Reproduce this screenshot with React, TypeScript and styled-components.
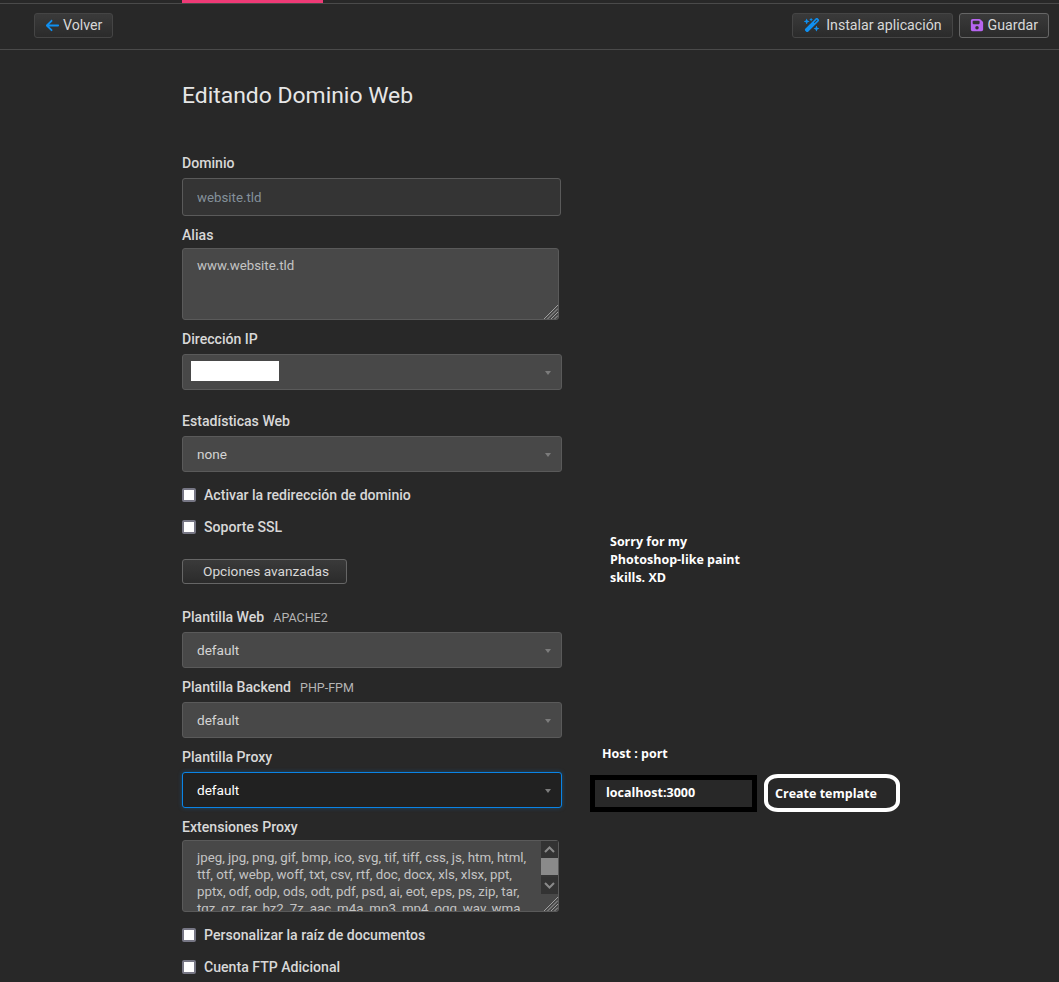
import React from "react";
import styled, { createGlobalStyle } from "styled-components";
import { FaArrowLeft, FaFloppyDisk, FaWandMagicSparkles } from "react-icons/fa6";

const Global = createGlobalStyle`
  html, body { margin: 0; padding: 0; background: #282828; height: 982px; overflow: hidden; }
  body { font-family: Roboto, "Noto Sans", sans-serif; font-size: 14px; color: #ddd; }
  * { box-sizing: border-box; }
`;

const ProgressTrack = styled.div`
  height: 4px;
  border-bottom: 1px solid #4a4a4a;
  padding-left: 182px;
`;
const ProgressBar = styled.div`
  width: 141px;
  height: 3px;
  background: #ee3a76;
`;
const Toolbar = styled.header`
  height: 46px;
  border-bottom: 1px solid #4a4a4a;
  padding: 9px 10px 0 34px;
  display: flex;
  justify-content: space-between;
  align-items: flex-start;
`;
const ToolGroup = styled.div`
  display: flex;
  gap: 6px;
`;
const ToolButton = styled.button<{ $strong?: boolean; $gap: number; $left?: number }>`
  height: 25px;
  display: inline-flex;
  align-items: center;
  gap: ${(p) => p.$gap}px;
  padding: 0 10px 1px ${(p) => p.$left ?? 10}px;
  border: 1px solid ${(p) => (p.$strong ? "#666" : "#454545")};
  border-radius: 3px;
  background: linear-gradient(#3a3a3a, #2b2b2b);
  color: #d8d8d8;
  font: 400 14.2px Roboto, sans-serif;
  svg { flex: none; }
`;
const Page = styled.main`
  display: flex;
  padding-left: 182px;
`;
const Form = styled.form`
  width: 380px;
  padding-top: 31px;
  flex: none;
`;
const Title = styled.h1`
  margin: 0 0 42px;
  font: 400 22.9px/30px Roboto, sans-serif;
  color: #e6e6e6;
`;
const Label = styled.label<{ $top: number; $gap: number }>`
  display: flex;
  align-items: baseline;
  gap: 9px;
  height: 20px;
  margin: ${(p) => p.$top}px 0 ${(p) => p.$gap}px;
  font-weight: 500;
  font-size: 14.1px;
  line-height: 20px;
  color: #d8d8d8;
`;
const Hint = styled.span`
  font-weight: 400;
  font-size: 12.5px;
  color: #b5b5b5;
`;
const TextInput = styled.input`
  display: block;
  width: 379px;
  height: 38px;
  padding: 0 14px;
  border: 1px solid #5a5a5a;
  border-radius: 3px;
  background: #343434;
  color: #84919b;
  font: 400 13.3px Roboto, sans-serif;
  outline: none;
`;
const AreaWrap = styled.div`
  position: relative;
  width: 377px;
`;
const TextArea = styled.textarea`
  display: block;
  width: 377px;
  height: 72px;
  padding: 8px 14px;
  border: 1px solid #5a5a5a;
  border-radius: 3px;
  background: #484848;
  color: #c4c4c4;
  font: 400 13.3px/17px Roboto, sans-serif;
  outline: none;
  resize: vertical;
  overflow: hidden;
  &::-webkit-resizer {
    background: url("data:image/svg+xml,%3Csvg xmlns='http://www.w3.org/2000/svg' width='15' height='15'%3E%3Cpath d='M15 1L1 15M15 4.5L4.5 15M15 8L8 15M15 11.5L11.5 15' stroke='%23a0a0a0' stroke-width='1' fill='none'/%3E%3C/svg%3E") no-repeat;
  }
`;
const ScrollBar = styled.div`
  position: absolute;
  top: 1px;
  right: 1px;
  width: 17px;
  height: 53px;
  display: flex;
  flex-direction: column;
  background: #363636;
`;
const ScrollStep = styled.div`
  height: 17px;
  flex: none;
  display: flex;
  align-items: center;
  justify-content: center;
  background: #333;
`;
const ScrollThumb = styled.div`
  height: 17px;
  margin-bottom: 2px;
  flex: none;
  background: #8a8a8a;
`;
const SelectWrap = styled.div`
  position: relative;
  width: 380px;
  &::after {
    content: "";
    position: absolute;
    right: 11px;
    top: 50%;
    margin-top: -1px;
    border: 3.5px solid transparent;
    border-top: 4px solid #7c7c7c;
    border-bottom: 0;
  }
`;
const Select = styled.select<{ $focus?: boolean }>`
  display: block;
  width: 100%;
  height: 36px;
  padding: 0 14px;
  appearance: none;
  border: 1px solid ${(p) => (p.$focus ? "#0a84e6" : "#5a5a5a")};
  border-radius: 3px;
  background: ${(p) => (p.$focus ? "#212121" : "#484848")};
  color: ${(p) => (p.$focus ? "#fff" : "#d4d4d4")};
  font: 400 13.6px Roboto, sans-serif;
  outline: none;
  box-shadow: ${(p) => (p.$focus ? "0 0 4px rgba(10,132,230,.35)" : "none")};
`;
const Redaction = styled.div`
  position: absolute;
  left: 9px;
  top: 7px;
  width: 88px;
  height: 20px;
  background: #fff;
`;
const CheckRow = styled.label<{ $top: number }>`
  display: flex;
  align-items: center;
  gap: 8px;
  height: 20px;
  margin-top: ${(p) => p.$top}px;
  font-weight: 500;
  font-size: 14.1px;
  color: #d8d8d8;
`;
const Check = styled.input`
  appearance: none;
  flex: none;
  margin: 0;
  width: 14px;
  height: 14px;
  border: 2px solid #777785;
  border-radius: 2px;
  background: #fff;
`;
const PlainButton = styled.button`
  display: block;
  width: 165px;
  height: 25px;
  margin-top: 22px;
  padding: 0 0 2px 3px;
  border: 1px solid #666;
  border-radius: 3px;
  background: linear-gradient(#3a3a3a, #2b2b2b);
  color: #d8d8d8;
  font: 400 13.7px Roboto, sans-serif;
`;
const Aside = styled.aside`
  margin-left: 28px;
  padding-top: 483px;
  font-family: "Open Sans", "Noto Sans", sans-serif;
  font-weight: 700;
  font-size: 12.5px;
  color: #fff;
`;
const Note = styled.p`
  margin: 0 0 157px 20px;
  width: 150px;
  line-height: 18px;
`;
const HostLabel = styled.div`
  margin: 0 0 11px 12px;
  line-height: 20px;
`;
const HostRow = styled.div`
  display: flex;
  align-items: flex-start;
  gap: 7px;
`;
const HostBox = styled.div`
  width: 167px;
  height: 37px;
  padding: 2px 0 0 11px;
  border: 5px solid #000;
  line-height: 22px;
`;
const CreateBox = styled.div`
  width: 136px;
  height: 38px;
  margin-top: -1px;
  padding: 5px 0 0 7px;
  border: 4px solid #fff;
  border-radius: 14px / 11px;
  line-height: 22px;
`;

const EXTENSIONS =
  "jpeg, jpg, png, gif, bmp, ico, svg, tif, tiff, css, js, htm, html,\nttf, otf, webp, woff, txt, csv, rtf, doc, docx, xls, xlsx, ppt,\npptx, odf, odp, ods, odt, pdf, psd, ai, eot, eps, ps, zip, tar,\ntgz, gz, rar, bz2, 7z, aac, m4a, mp3, mp4, ogg, wav, wma,\n3gp, avi, flv, m4v, mkv, mov, mpeg, mpg, wmv, exe, iso, dmg,\nswf, woff2";

const Chevron = ({ up }: { up?: boolean }) => (
  <svg width="11" height="7" viewBox="0 0 11 7">
    <path d={up ? "M1 6l4.5-4.5L10 6" : "M1 1l4.5 4.5L10 1"} fill="none" stroke="#8a8a8a" strokeWidth="2" />
  </svg>
);

export default function App() {
  return (
    <>
      <Global />
      <ProgressTrack>
        <ProgressBar />
      </ProgressTrack>
      <Toolbar>
        <ToolButton type="button" $gap={3}>
          <FaArrowLeft size={15} color="#0f8ff0" />
          Volver
        </ToolButton>
        <ToolGroup>
          <ToolButton type="button" $gap={6} $left={11}>
            <FaWandMagicSparkles size={16} color="#0f8ff0" />
            Instalar aplicación
          </ToolButton>
          <ToolButton type="button" $strong $gap={4}>
            <FaFloppyDisk size={14} color="#b765f0" />
            Guardar
          </ToolButton>
        </ToolGroup>
      </Toolbar>
      <Page>
        <Form>
          <Title>Editando Dominio Web</Title>
          <Label $top={0} $gap={5}>Dominio</Label>
          <TextInput defaultValue="website.tld" disabled />
          <Label $top={9} $gap={3}>Alias</Label>
          <AreaWrap>
            <TextArea defaultValue="www.website.tld" />
          </AreaWrap>
          <Label $top={9} $gap={5}>Dirección IP</Label>
          <SelectWrap>
            <Select><option></option></Select>
            <Redaction />
          </SelectWrap>
          <Label $top={21} $gap={5}>Estadísticas Web</Label>
          <SelectWrap>
            <Select><option>none</option></Select>
          </SelectWrap>
          <CheckRow $top={13}><Check type="checkbox" />Activar la redirección de dominio</CheckRow>
          <CheckRow $top={12}><Check type="checkbox" />Soporte SSL</CheckRow>
          <PlainButton type="button">Opciones avanzadas</PlainButton>
          <Label $top={23} $gap={5}>Plantilla Web<Hint>APACHE2</Hint></Label>
          <SelectWrap>
            <Select><option>default</option></Select>
          </SelectWrap>
          <Label $top={9} $gap={5}>Plantilla Backend<Hint>PHP-FPM</Hint></Label>
          <SelectWrap>
            <Select><option>default</option></Select>
          </SelectWrap>
          <Label $top={9} $gap={5}>Plantilla Proxy</Label>
          <SelectWrap>
            <Select $focus><option>default</option></Select>
          </SelectWrap>
          <Label $top={9} $gap={3}>Extensiones Proxy</Label>
          <AreaWrap>
            <TextArea defaultValue={EXTENSIONS} />
            <ScrollBar>
              <ScrollStep><Chevron up /></ScrollStep>
              <ScrollThumb />
              <ScrollStep><Chevron /></ScrollStep>
            </ScrollBar>
          </AreaWrap>
          <CheckRow $top={13}><Check type="checkbox" />Personalizar la raíz de documentos</CheckRow>
          <CheckRow $top={12}><Check type="checkbox" />Cuenta FTP Adicional</CheckRow>
        </Form>
        <Aside>
          <Note>Sorry for my Photoshop-like paint skills. XD</Note>
          <HostLabel>Host : port</HostLabel>
          <HostRow>
            <HostBox>localhost:3000</HostBox>
            <CreateBox>Create template</CreateBox>
          </HostRow>
        </Aside>
      </Page>
    </>
  );
}
